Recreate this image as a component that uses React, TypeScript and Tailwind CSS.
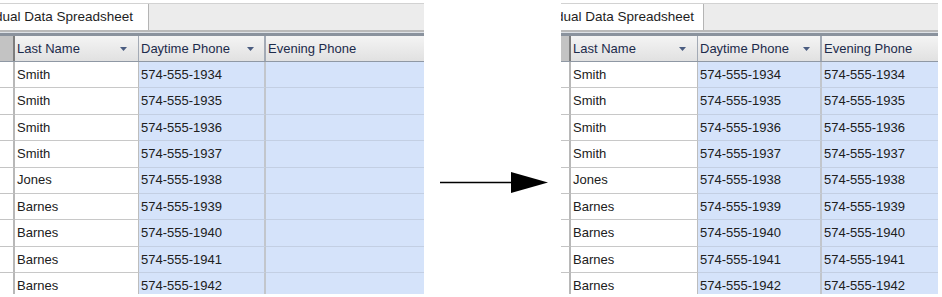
import React from 'react';

const people: [string, string][] = [
  ['Smith', '574-555-1934'],
  ['Smith', '574-555-1935'],
  ['Smith', '574-555-1936'],
  ['Smith', '574-555-1937'],
  ['Jones', '574-555-1938'],
  ['Barnes', '574-555-1939'],
  ['Barnes', '574-555-1940'],
  ['Barnes', '574-555-1941'],
  ['Barnes', '574-555-1942'],
];

function Caret() {
  return (
    <svg width="7" height="4" viewBox="0 0 7 4" className="shrink-0">
      <path d="M0 0H7L3.5 4Z" fill="#4a5c80" />
    </svg>
  );
}

interface PanelProps {
  width: string;
  tabW: string;
  gutterW: string;
  nameW: string;
  dayW: string;
  filled: boolean;
}

function Panel({ width, tabW, gutterW, nameW, dayW, filled }: PanelProps) {
  return (
    <div className={`flex h-[294px] shrink-0 flex-col overflow-hidden ${width}`}>
      <div className="h-[3px] shrink-0 bg-white" />
      {/* tab strip */}
      <div className="flex h-[27px] shrink-0 border-t border-[#d2d2d2]">
        <div className={`flex shrink-0 items-center overflow-hidden border-r border-[#b4b4b4] bg-white ${tabW}`}>
          <span className="-ml-[5px] whitespace-nowrap text-[13.5px] text-[#1e1e1e]">dual Data Spreadsheet</span>
        </div>
        <div className="flex-1 bg-[#ececec]" />
      </div>
      <div className="h-[2px] shrink-0 bg-[#b9b9b9]" />
      <div className="h-[1px] shrink-0 bg-[#dde1e6]" />
      <div className="h-[3px] shrink-0 bg-[#8a929d]" />
      {/* header */}
      <div className="flex h-[26px] shrink-0 border-b border-[#8f98a4] bg-gradient-to-b from-[#f4f4f4] to-[#e1e1e1] text-[13px] text-[#1c2b4b]">
        <div className={`shrink-0 border-r-2 border-[#7d7d7d] bg-[#c3c3c3] ${gutterW}`} />
        <div className={`flex shrink-0 items-center justify-between border-r border-[#a3aab5] pl-[2px] pr-[11px] ${nameW}`}>
          <span>Last Name</span>
          <Caret />
        </div>
        <div className={`flex shrink-0 items-center justify-between border-r-2 border-[#a3aab5] pl-[2px] pr-[10px] ${dayW}`}>
          <span>Daytime Phone</span>
          <Caret />
        </div>
        <div className="flex flex-1 items-center pl-[2px]">
          <span>Evening Phone</span>
        </div>
      </div>
      {/* rows */}
      {people.map(([name, phone], i) => (
        <div key={i} className="flex h-[26.375px] shrink-0 text-[13px] text-[#202020]">
          <div className={`shrink-0 border-r-2 border-b border-r-[#b8b8b8] border-b-[#c4c4c4] bg-white ${gutterW}`} />
          <div className={`flex shrink-0 items-center border-r border-b border-r-[#bdbdbd] border-b-[#c8c8c8] bg-white pl-[2px] ${nameW}`}>
            {name}
          </div>
          <div className={`flex shrink-0 items-center border-r-2 border-b border-r-[#c2c6cc] border-b-[#c3cfe3] bg-[#d5e3fa] pl-[2px] ${dayW}`}>
            {phone}
          </div>
          <div className="flex flex-1 items-center border-b border-[#c3cfe3] bg-[#d5e3fa] pl-[2px]">
            {filled ? phone : ''}
          </div>
        </div>
      ))}
    </div>
  );
}

export default function App() {
  return (
    <div
      className="flex h-[297px] w-[942px] overflow-hidden bg-white"
      style={{ fontFamily: '"Liberation Sans", Arial, sans-serif' }}
    >
      <Panel width="w-[424px]" tabW="w-[149px]" gutterW="w-[15px]" nameW="w-[124px]" dayW="w-[127px]" filled={false} />
      <div className="w-[137px] shrink-0">
        <svg width="109" height="22" viewBox="0 0 109 22" className="ml-[16px] mt-[171px]">
          <line x1="0" y1="11.5" x2="74" y2="11.5" stroke="#000" strokeWidth="1.3" />
          <path d="M71 1L108 11.5L71 22Z" fill="#000" />
        </svg>
      </div>
      <Panel width="w-[377px]" tabW="w-[143px]" gutterW="w-[10px]" nameW="w-[127px]" dayW="w-[124px]" filled />
    </div>
  );
}
